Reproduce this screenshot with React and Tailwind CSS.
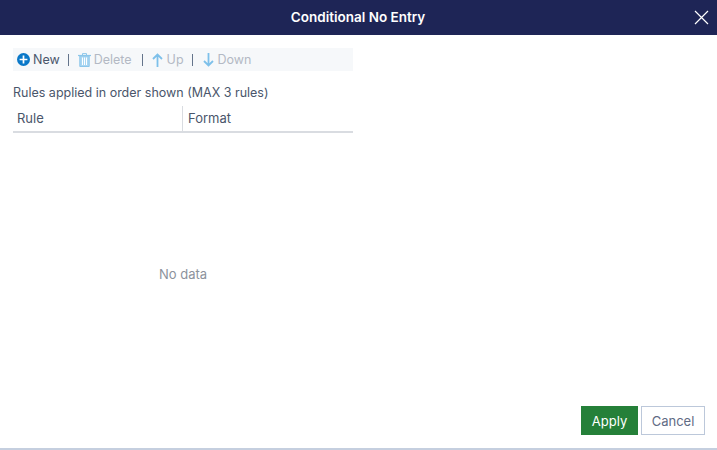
import React from 'react';

const PlusIcon = () => (
  <svg width="13" height="13" viewBox="0 0 13 13">
    <circle cx="6.5" cy="6.5" r="6.5" fill="#0a78c8" />
    <path d="M6.5 2.6v7.8M2.6 6.5h7.8" stroke="#fff" strokeWidth="1.7" />
  </svg>
);

const TrashIcon = () => (
  <svg width="13" height="14" viewBox="0 0 13 14" fill="none" stroke="#8cc6ea" strokeWidth="1">
    <path d="M0 2.5h13" strokeWidth="1.2" />
    <path d="M4.5 2V0.6h4V2" />
    <path d="M1.8 3v10.5h9.4V3z" fill="#a9d6f2" />
    <path d="M4.5 4.5v7.5M6.5 4.5v7.5M8.5 4.5v7.5" stroke="#fff" />
  </svg>
);

const ArrowIcon = ({ up }) => (
  <svg width="11" height="14" viewBox="0 0 11 14" fill="none" stroke="#7dc0ea" strokeWidth="1.8">
    {up ? <path d="M5.5 14V1.5M1 6l4.5-4.5L10 6" /> : <path d="M5.5 0v12.5M1 8l4.5 4.5L10 8" />}
  </svg>
);

const Sep = ({ className }) => <span className={className} />;

const App = () => {
  return (
    <div className="w-[717px] h-[450px] flex flex-col bg-white overflow-hidden font-['Inter',sans-serif] text-[13px] text-[#4a566b]">
      {/* Header */}
      <div className="h-[35px] shrink-0 bg-[#1e2556] flex items-center justify-center relative">
        <span className="text-white font-semibold text-[13.5px] pr-[1px]">Conditional No Entry</span>
        <button className="absolute right-[8px] top-[10px]">
          <svg width="15" height="15" viewBox="0 0 15 15" fill="none" stroke="#fff" strokeWidth="1.2" className="block">
            <path d="M1 1l13 13M14 1L1 14" />
          </svg>
        </button>
      </div>

      {/* Body */}
      <div className="flex-1 flex flex-col pl-[13px] pr-[12px] pt-[13px] pb-[13px] border-b-2 border-[#c5cfdf]">
        <div className="w-[340px] h-[23px] bg-[#f6f8fa] flex items-center pl-[4px] text-[12.5px]">
          <span className="flex items-center gap-[3px] text-[#4a566b]"><PlusIcon /><span className="pt-[2px]">New</span></span>
          <Sep className="w-px h-[12px] bg-[#64748b] ml-[8px] mr-[9px]" />
          <span className="flex items-center gap-[3px] text-[#b3b9c4]"><TrashIcon /><span className="pt-[2px]">Delete</span></span>
          <Sep className="w-px h-[12px] bg-[#64748b] ml-[10px] mr-[9px]" />
          <span className="flex items-center gap-[4px] text-[#b3b9c4]"><ArrowIcon up /><span className="pt-[2px]">Up</span></span>
          <Sep className="w-px h-[12px] bg-[#64748b] ml-[8px] mr-[10px]" />
          <span className="flex items-center gap-[4px] text-[#b3b9c4]"><ArrowIcon /><span className="pt-[2px]">Down</span></span>
        </div>

        <div className="mt-[14px] text-[12.5px] leading-[16px]">Rules applied in order shown (MAX 3 rules)</div>

        <div className="w-[340px] mt-[5px] h-[27px] flex border-b-2 border-[#d9dce1]">
          <div className="w-[170px] pl-[4px] border-r border-[#d9dce1] leading-[25px]">Rule</div>
          <div className="pl-[5px] leading-[25px]">Format</div>
        </div>

        <div className="w-[340px] h-[37px] mt-[132px] text-center text-[#8c929c]">No data</div>

        <div className="mt-auto flex justify-end gap-[3px]">
          <button className="w-[57px] h-[29px] pt-[2px] bg-[#258039] text-white">Apply</button>
          <button className="w-[64px] h-[29px] pt-[2px] bg-white border border-[#bcc8da] text-[#5f6b84]">Cancel</button>
        </div>
      </div>
    </div>
  );
};

export default App;
